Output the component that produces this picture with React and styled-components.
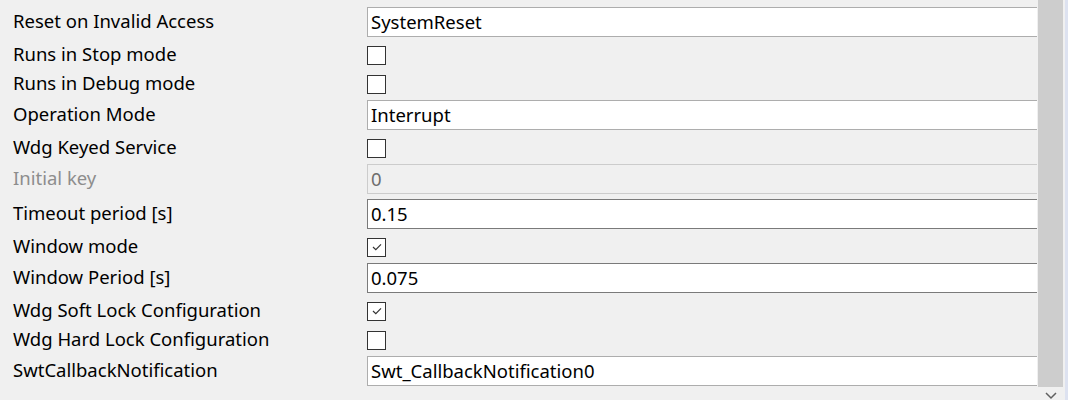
import React from "react";
import styled, { createGlobalStyle } from "styled-components";

const GlobalStyle = createGlobalStyle`
  html, body {
    margin: 0;
    padding: 0;
    background: #f0f0f0;
  }
  body {
    font-family: "Noto Sans", "Liberation Sans", sans-serif;
  }
`;

const rows = [
  { label: "Reset on Invalid Access", type: "combo", value: "SystemReset" },
  { label: "Runs in Stop mode", type: "check", checked: false },
  { label: "Runs in Debug mode", type: "check", checked: false },
  { label: "Operation Mode", type: "combo", value: "Interrupt" },
  { label: "Wdg Keyed Service", type: "check", checked: false },
  { label: "Initial key", type: "text", value: "0", disabled: true },
  { label: "Timeout period [s]", type: "text", value: "0.15" },
  { label: "Window mode", type: "check", checked: true },
  { label: "Window Period [s]", type: "text", value: "0.075" },
  { label: "Wdg Soft Lock Configuration", type: "check", checked: true },
  { label: "Wdg Hard Lock Configuration", type: "check", checked: false },
  { label: "SwtCallbackNotification", type: "combo", value: "Swt_CallbackNotification0" },
];

const App = () => {
  return (
    <>
      <GlobalStyle />
      <Window>
        <Content>
          <Form>
            {rows.map((row) => (
              <Row key={row.label} $check={row.type === "check"}>
                <Label $disabled={row.disabled}>{row.label}</Label>
                {row.type === "check" ? (
                  <CheckBox>
                    {row.checked && (
                      <svg width="10" height="8" viewBox="0 0 10 8">
                        <path d="M1 4 L3.8 6.6 L9 1.4" fill="none" stroke="#333" strokeWidth="1.2" />
                      </svg>
                    )}
                  </CheckBox>
                ) : (
                  <Field $variant={row.disabled ? "disabled" : row.type}>{row.value}</Field>
                )}
              </Row>
            ))}
          </Form>
        </Content>
        <ScrollBar>
          <Thumb />
          <ArrowDown>
            <svg width="12" height="8" viewBox="0 0 12 8">
              <path d="M1 1 L6 6 L11 1" fill="none" stroke="#606060" strokeWidth="1.5" />
            </svg>
          </ArrowDown>
        </ScrollBar>
        <EdgeStrip />
      </Window>
    </>
  );
};

export default App;

const Window = styled.div`
  display: flex;
  width: 1068px;
  height: 400px;
  overflow: hidden;
  background: #f0f0f0;
`;
const Content = styled.div`
  flex: 1;
  overflow: hidden;
`;
const Form = styled.div`
  display: flex;
  flex-direction: column;
  gap: 5px;
  padding: 7px 0 0 13px;
`;
const Row = styled.div`
  display: grid;
  grid-template-columns: 354px 1fr;
  align-items: center;
  height: ${(p) => (p.$check ? "24px" : "30px")};
`;
const Label = styled.div`
  font-size: 18.5px;
  line-height: 24px;
  padding-bottom: 2px;
  color: ${(p) => (p.$disabled ? "#8d8d8d" : "#000")};
  white-space: nowrap;
`;
const Field = styled.div`
  box-sizing: border-box;
  height: 30px;
  margin-right: -4px;
  padding: 0 3px 2px;
  display: flex;
  align-items: center;
  font-size: 18.5px;
  white-space: nowrap;
  background: ${(p) => (p.$variant === "disabled" ? "#f0f0f0" : "#fff")};
  color: ${(p) => (p.$variant === "disabled" ? "#6d6d6d" : "#000")};
  border: 1px solid
    ${(p) =>
      p.$variant === "combo" ? "#adadad" : p.$variant === "disabled" ? "#cccccc" : "#7a7a7a"};
`;
const CheckBox = styled.span`
  box-sizing: border-box;
  width: 19px;
  height: 19px;
  border: 1px solid #333;
  background: #fff;
  display: flex;
  align-items: center;
  justify-content: center;
`;
const ScrollBar = styled.div`
  position: relative;
  width: 28px;
  flex-shrink: 0;
  padding: 0 2px 0 1px;
  box-sizing: border-box;
  background: #f0f0f0;
  display: flex;
  flex-direction: column;
`;
const Thumb = styled.div`
  height: 389px;
  background: #cdcdcd;
`;
const ArrowDown = styled.div`
  display: flex;
  justify-content: center;
  padding-top: 5px;
`;
const EdgeStrip = styled.div`
  width: 3px;
  flex-shrink: 0;
  background: #dde2f0;
`;
